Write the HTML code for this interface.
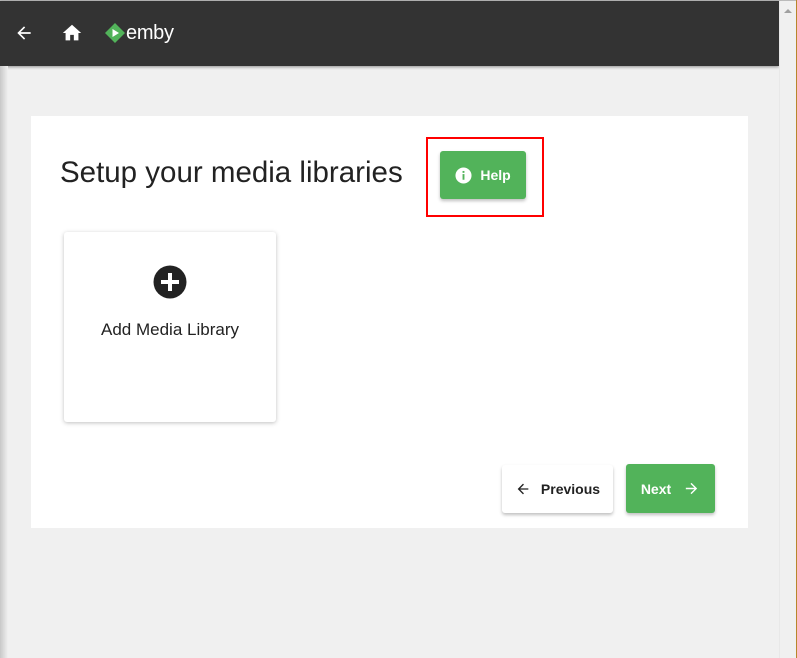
<!DOCTYPE html>
<html><head><meta charset="utf-8"><style>
*{margin:0;padding:0;box-sizing:border-box}
html,body{width:797px;height:658px;overflow:hidden;background:#f0f0f0;font-family:"Liberation Sans",sans-serif;position:relative}
.hdr{position:absolute;left:0;top:1px;width:779px;height:65px;background:#333;box-shadow:0 1px 3px rgba(0,0,0,.4)}
.topline{position:absolute;left:0;top:0;width:797px;height:1px;background:#bbb}
.lstrip{position:absolute;left:0;top:66px;width:8px;height:592px;background:linear-gradient(to right,#c8c8c8,#f0f0f0)}
.sb{position:absolute;left:779px;top:1px;width:17px;height:657px;background:#f0f0f0;border-left:1px solid #e8e8e8}
.gold{position:absolute;left:796px;top:0;width:1px;height:658px;background:#b8862b}
.card{position:absolute;left:31px;top:116px;width:717px;height:412px;background:#fff}
h1{position:absolute;left:60px;top:156px;font-size:29.5px;font-weight:normal;color:#222;white-space:nowrap;letter-spacing:0}
.btn{position:absolute;border-radius:3px;box-shadow:0 2px 3px rgba(0,0,0,.25);font-weight:bold;font-size:14px;display:flex;align-items:center;justify-content:center}
.green{background:#52b35a;color:#fff}
.red{position:absolute;left:426px;top:137px;width:118px;height:80px;border:2px solid #f00}
.lib{position:absolute;left:64px;top:232px;width:212px;height:190px;background:#fff;border-radius:3px;box-shadow:0 1px 4px rgba(0,0,0,.25)}
</style></head><body>
<div class="topline"></div>
<div class="hdr">
<svg style="position:absolute;left:14px;top:22px" width="20" height="20" viewBox="0 0 24 24"><path d="M20 11H7.83l5.59-5.59L12 4l-8 8 8 8 1.41-1.41L7.83 13H20v-2z" fill="#fff"/></svg>
<svg style="position:absolute;left:61px;top:21px" width="22" height="22" viewBox="0 0 24 24"><path d="M10 20v-6h4v6h5v-8h3L12 3 2 12h3v8z" fill="#fff"/></svg>
<svg style="position:absolute;left:104px;top:21px" width="22" height="22" viewBox="0 0 22 22"><path d="M11 1 L21 11 L11 21 L1 11 Z" fill="#52b35a"/><path d="M8.5 7 L15 11 L8.5 15 Z" fill="#fff"/></svg>
<div style="position:absolute;left:126px;top:21px;color:#fff;font-size:20px;letter-spacing:-0.3px">emby</div>
</div>
<div class="lstrip"></div>
<div class="sb"><div style="position:absolute;left:4px;top:8px;width:0;height:0;border-left:4px solid transparent;border-right:4px solid transparent;border-bottom:4px solid #a0a0a0"></div></div>
<div class="gold"></div>
<div class="card"></div>
<h1>Setup your media libraries</h1>
<div class="btn green" style="left:440px;top:151px;width:86px;height:48px"><svg width="17" height="17" viewBox="0 0 18 18" style="margin-right:8px"><circle cx="9" cy="9" r="8.5" fill="#fff"/><rect x="8" y="7.5" width="2" height="6" fill="#52b35a"/><rect x="8" y="4.2" width="2" height="2" fill="#52b35a"/></svg>Help</div>
<div class="red"></div>
<div class="lib">
<svg style="position:absolute;left:89px;top:33px" width="34" height="34" viewBox="0 0 34 34"><circle cx="17" cy="17" r="16.5" fill="#222"/><rect x="15" y="8" width="4" height="18" fill="#fff"/><rect x="8" y="15" width="18" height="4" fill="#fff"/></svg>
<div style="position:absolute;left:0;top:88px;width:212px;text-align:center;font-size:17px;color:#222">Add Media Library</div>
</div>
<div class="btn" style="left:502px;top:465px;width:111px;height:48px;background:#fff;color:#222;font-weight:bold"><svg width="16" height="16" viewBox="0 0 24 24" style="margin-right:10px"><path d="M20 11H7.83l5.59-5.59L12 4l-8 8 8 8 1.41-1.41L7.83 13H20v-2z" fill="#222"/></svg><span style="font-size:14px">Previous</span></div>
<div class="btn green" style="left:626px;top:464px;width:89px;height:49px">Next<svg width="17" height="17" viewBox="0 0 24 24" style="margin-left:12px"><path d="M4 11h12.17l-5.59-5.59L12 4l8 8-8 8-1.41-1.41L16.17 13H4v-2z" fill="#fff"/></svg></div>
</body></html>
